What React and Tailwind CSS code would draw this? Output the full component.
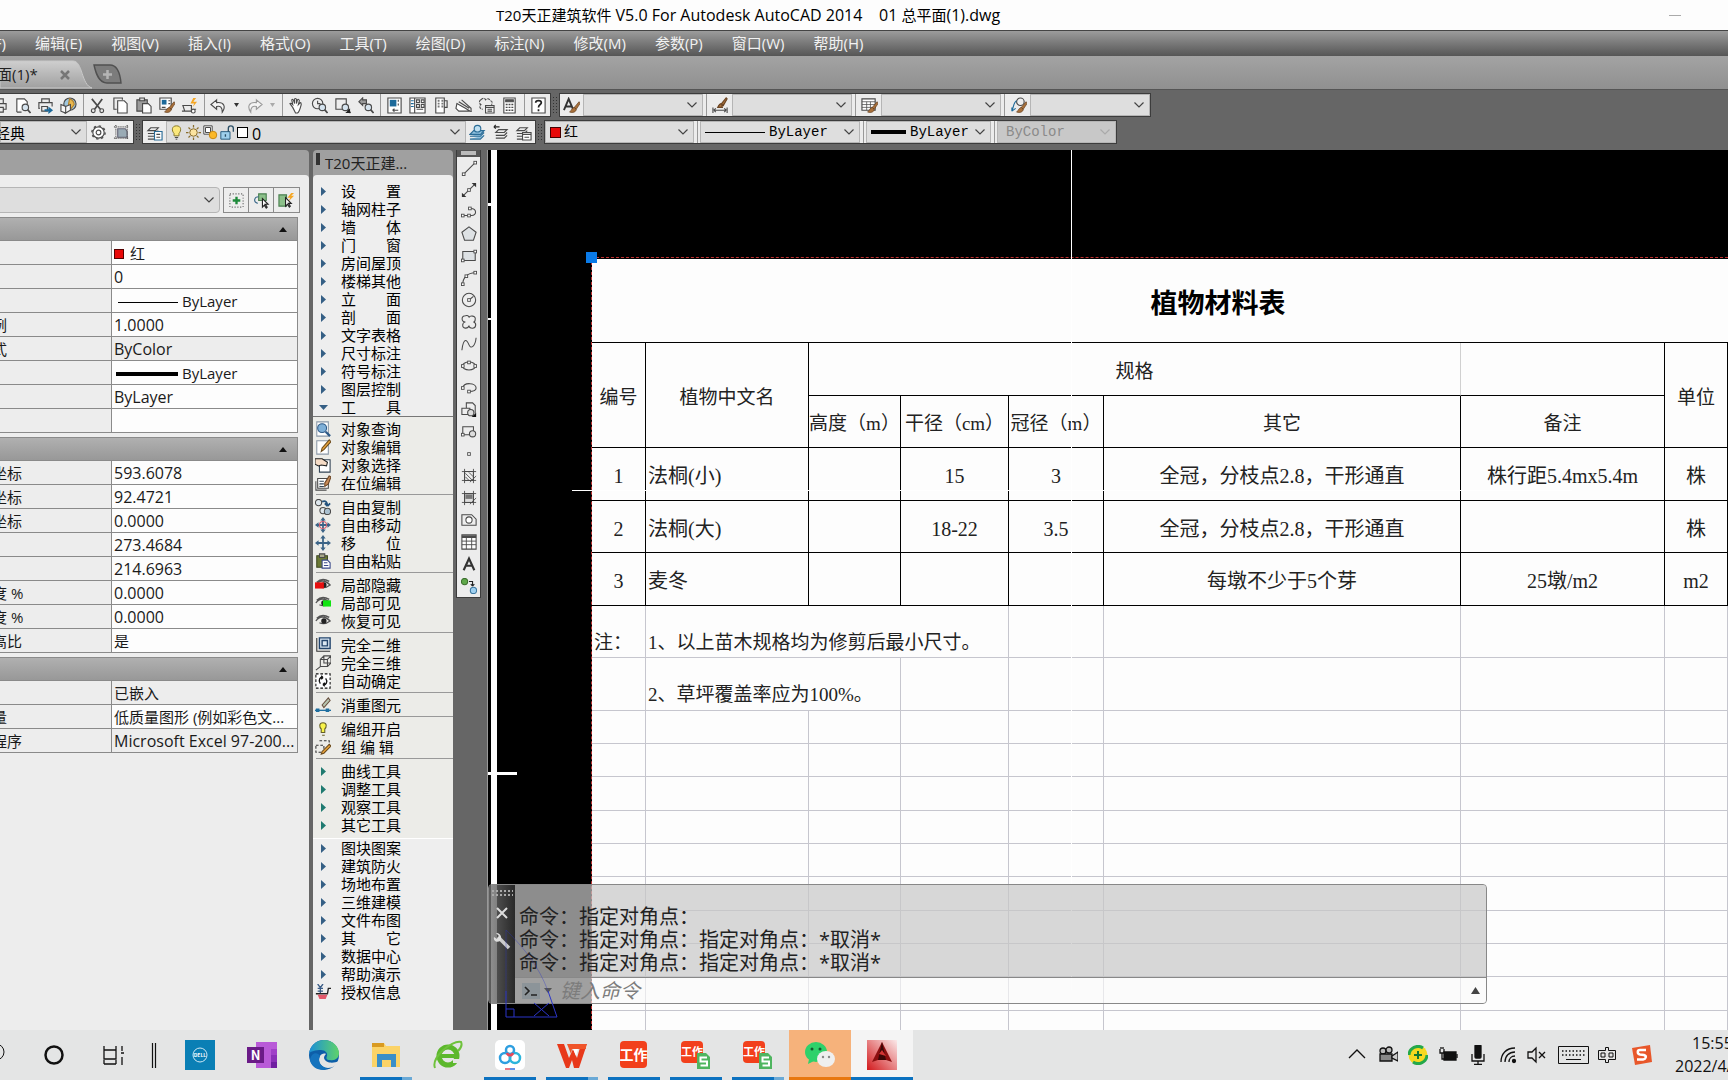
import { useState } from 'react';

const INK = '#4a4a4a';

function Svg({ size = 18, children, vb = '0 0 18 18' }) {
  return (
    <svg width={size} height={size} viewBox={vb} fill="none" stroke={INK} strokeWidth="1.2" className="shrink-0">
      {children}
    </svg>
  );
}

const brush = <path d="M17 5l-5 6 2 2 4-6zM12 11c-2 0-3 3-5 5 3 1 7 0 7-3z" fill="#a8703a" stroke="#6b4524" strokeWidth=".8" />;
const layers = <path d="M5 4h8l-3 3H2zM2 10h8l3-3M2 13h8l3-3M2 16h8l3-3" />;
const glass = <><circle cx="12" cy="11" r="3.4" fill="#d5e3ee" /><path d="M14.4 13.4L17.5 17" strokeWidth="1.8" /></>;

const TOOL_ICONS = {
  print: <><path d="M5 7V2h8v5M2 13V7h14v6h-3M5 11h8v5H5z" /></>,
  preview: <><path d="M3 16V2h8l3 3v3M3 16h5" fill="#fff" />{glass}</>,
  publish: <><path d="M5 6V2h8v4M3 12H2V6h14v4M5 10h6v5H5z" /><path d="M8 13h4v-3l5 4-5 4v-3H8z" fill="#1d6a9a" stroke="none" /></>,
  globe: <><circle cx="10.5" cy="7.5" r="6.5" fill="#9fc6dd" /><path d="M10 2c3 1 5 3 5 6l-3 4-3-4z" fill="#e9b84f" stroke="#b58127" /><path d="M1 8l5 2v7l-5-2zM6 10l5-2v6l-5 3z" fill="#f7f7f7" /></>,
  cut: <><path d="M3 2l9 11M14 2L6 13" strokeWidth="1.8" /><circle cx="4.5" cy="14.5" r="2" /><circle cx="13.5" cy="14.5" r="2" /></>,
  copy: <><path d="M11 3V1H2v12h3" /><path d="M6 4h7l3 3v10H6z" fill="#fff" /></>,
  paste: <><path d="M2 3h11v12H2z" fill="#9b9b9b" /><path d="M5 1h5v3H5z" fill="#ddd" /><path d="M8 7h6l3 3v7H8z" fill="#fff" /></>,
  match: <><path d="M2 1h12v12H2z" fill="#fff" /><path d="M4 3h5v5H4z" fill="#1d6a9a" stroke="none" /><path d="M11 4h2M11 7h2M4 11h4" />{brush}</>,
  block: <><path d="M2 9h9v6H4zM1 15h3M11 13h5" /><circle cx="13" cy="15" r="2" fill="#fff" /><path d="M13 1l-3 6h4l-2 4 5-6h-4l3-4z" fill="#f5a623" stroke="none" /></>,
  undo: <path d="M7 3L1 8l6 5v-3c4-1 6 1 6 6 4-6 2-11-6-10z" fill="#f4f4f4" />,
  redo: <path d="M11 3l6 5-6 5v-3c-4-1-6 1-6 6-4-6-2-11 6-10z" fill="#f4f4f4" stroke="#9a9a9a" />,
  pan: <path d="M5 11L2 7c1-1 2 0 3 1L4 3c1-1 2 0 2 1l1 3V2c1-1 2 0 2 1v4l1-4c1-1 2 0 2 1l-1 4 2-2c1 0 1 1 1 2-1 4-2 8-4 9H8z" fill="#fff" />,
  zoom: <><circle cx="7" cy="7" r="5.5" fill="#eee" /><path d="M7 4v3h3" />{glass}</>,
  zoomWin: <><path d="M2 2h11v11H2z" fill="#eee" />{glass}<path d="M17 12v5h-5z" fill="#222" stroke="none" /></>,
  zoomPrev: <><path d="M6 1L2 5l4 4V7h4V3H6z" fill="#999" />{glass}</>,
  props: <><path d="M2 1h14v16H2z" fill="#fff" /><path d="M4 3h7v7H4z" fill="#1d6a9a" stroke="none" /><path d="M13 3v2M13 7v2M7 14h6M7 14l2-1.500M7 14l2 1.500" /></>,
  center: <><path d="M1 1h16v16H1zM6 1v16" fill="#fff" /><path d="M2 4h3M2 7h3M2 10h3" stroke="#1d6a9a" /><path d="M8 3h3v3H8zM13 3h3v3h-3zM8 8h3v3H8zM13 8h3v3h-3zM8 13h7" /></>,
  palettes: <><path d="M4 1h9v16H4z" fill="#fff" /><path d="M6 4h2M10 4h2M6 7h2M10 7h2M6 10h2M10 10h2" strokeWidth="2" stroke="#777" /><path d="M13 4h3v7h-3" /></>,
  sheets: <><path d="M2 7l9 5 5 3H4L1 12z" fill="#fff" /><path d="M4 5l11 7M7 3l10 9v4" /></>,
  markup: <><path d="M3 3c2-2 4-2 5 0 2-2 4-1 5 1 2 0 3 3 1 4M3 3C1 4 1 7 3 8c-2 2-1 5 2 5" strokeDasharray="3 1" /><path d="M8 9h9v8H8z" fill="#fff" /><path d="M8 11h9M10 13h5M10 15h5" /></>,
  calc: <><path d="M3 1h12v16H3z" fill="#fff" /><path d="M5 3h8v2H5z" fill="#555" /><path d="M5 8h8M5 11h8M5 14h8" strokeWidth="1.500" strokeDasharray="2 1" /></>,
  help: <><path d="M2 1h14v16H2z" fill="#fff" /><path d="M6 6c0-3 6-3 6 0 0 2-3 2-3 5M9 13v2" stroke="#222" strokeWidth="1.800" /></>,
  textStyle: <><path d="M1 14L6 2l5 12M3 10h6" stroke="#333" strokeWidth="2" />{brush}</>,
  dimStyle: <><path d="M1 11v6M16 11v6M2 14h13M2 14l2-2M2 14l2 2M15 14l-2-2M15 14l-2 2" /><path d="M15 1l-5 6 2 2 4-7zM10 7c-2 0-3 2-4 4h5z" fill="#a8703a" stroke="#6b4524" /></>,
  tableStyle: <><path d="M1 2h14v12H1z" fill="#fff" /><path d="M1 5h14M1 8h14M1 11h14M6 5v9M10 5v9" strokeWidth=".8" />{brush}</>,
  leaderStyle: <><circle cx="11" cy="5" r="4" fill="#eee" /><path d="M7 4C4 5 4 10 2 15M2 15v-4M2 15l4-3" stroke="#1d6a9a" />{brush}</>,
  gear: <><circle cx="9" cy="9" r="6" fill="#fff" /><circle cx="9" cy="9" r="2.500" /><circle cx="9" cy="9" r="7" strokeDasharray="2.500 3" strokeWidth="1.500" /></>,
  workspace: <><path d="M5 5h8l2 3v6H5z" fill="#9aabb5" stroke="#667" /><path d="M1 3h16M3 1v16M15 1v16M1 15h16" strokeDasharray="1 1" /></>,
  layerMgr: <>{layers}<path d="M9 8h8v9H9z" fill="#fff" stroke="#2b6c96" /><path d="M11 11h4M11 14h4" /></>,
  layerCur: <><path d="M5 7h11l-4 4H1zM1 13h11l4-4M1 16h11l4-4" fill="#8fc1df" stroke="#2b6c96" /><circle cx="9" cy="5" r="3.500" fill="#bfe0f2" stroke="#2b6c96" /></>,
  layerPrev: <><path d="M7 6h9l-3 3H4zM4 12h9l3-3M4 15h9l3-3" /><path d="M8 3H2M2 3l2-2M2 3l2 2" stroke="#222" /></>,
  layerState: <>{layers}<path d="M8 9h9v8H8z" fill="#fff" /><path d="M8 11h9M10 14h5" /></>,
  addSel: <><path d="M2 2h14v14H2z" strokeDasharray="1 2" /><path d="M9 5v8M5 9h8" stroke="#1f8a3b" strokeWidth="2.500" /></>,
  pickSel: <><path d="M6 2h8v7H6z" fill="#8cc08a" stroke="#4a8050" /><path d="M6 5C1 5 0 11 5 12" stroke="#3d6b8c" /><path d="M10 7v9l2-2 2 3 1-1-2-3h3z" fill="#fff" stroke="#222" /></>,
  quickSel: <><path d="M1 3h8v12H1z" fill="#8cc08a" stroke="#4a8050" /><path d="M14 1l-4 5h3l-2 4 6-6h-3l3-3z" fill="#f5a623" stroke="none" /><path d="M8 6v9l2-2 2 3 1-1-2-3h3z" fill="#fff" stroke="#222" /></>,
  bulb: <><path d="M9 1c-6 0-6 6-3 9v3h6v-3c3-3 3-9-3-9z" fill="#fbe87c" stroke="#8a7a2a" /><path d="M7 15h4M8 17h2" /></>,
  sun: <><circle cx="9" cy="9" r="4.500" fill="#fbe3a0" stroke="#8a6d2c" /><path d="M9 0v3M9 15v3M0 9h3M15 9h3M3 3l2 2M13 13l2 2M15 3l-2 2M3 15l2-2" stroke="#8a6d2c" strokeWidth="1.500" /></>,
  vpSun: <><path d="M1 1h10v10H1zM3 3h6v6H3z" fill="#fff" /><circle cx="12" cy="12" r="4.500" fill="#fbb829" stroke="#c98a14" /></>,
  lock: <><path d="M1 8h11v9H1z" fill="#9fd0ec" stroke="#2b5f80" /><path d="M10 8V4c0-4 6-4 6 0v4M6.500 11v3" stroke="#2b4f66" strokeWidth="1.600" /></>,
};

const node = (x, y) => <rect x={x - 1.5} y={y - 1.5} width="3" height="3" fill="#fff" strokeWidth="1" />;
const DRAW_TOOLS = [
  ['直线', <><path d="M3 16L16 3" />{node(3, 16)}{node(16, 3)}</>],
  ['构造线', <><path d="M2 16L16 2" />{node(9, 9)}<path d="M1 17v-5l5 5zM17 1v5l-5-5z" fill="#333" stroke="none" /></>],
  ['多段线', <><path d="M2 13h10c6 0 6-8-1-8" />{node(2, 13)}{node(9, 13)}{node(10, 5)}</>],
  ['正多边形', <path d="M9 1l8 6-3 9H4L1 7z" fill="#dde1e4" />],
  ['矩形', <><path d="M2 4h14v10H2z" fill="#dde1e4" />{node(2, 14)}{node(16, 4)}</>],
  ['圆弧', <><path d="M2 16C2 9 7 3 16 3" />{node(2, 16)}{node(6, 7)}{node(16, 3)}</>],
  ['圆', <><circle cx="9" cy="9" r="7.500" fill="#eee" /><path d="M9 9l5-4" />{node(9, 9)}</>],
  ['修订云线', <path d="M5 9C0 9 0 2 5 2c2-1 4 0 4 2 1-3 8-2 7 2 0 2-1 3-2 3 4 1 3 7-1 7-2 0-4-1-4-3-1 4-8 4-7-1 0-1 1-3 3-3z" fill="#eee" />],
  ['样条曲线', <path d="M1 16C3 0 7 5 9 10s7 2 8-8" />],
  ['椭圆', <><ellipse cx="9" cy="9" rx="7.500" ry="4.500" fill="#eee" />{node(2, 9)}{node(9, 5)}{node(16, 9)}</>],
  ['椭圆弧', <><path d="M2 9C3 2 17 3 17 9c0 3-4 4-8 4" />{node(2, 9)}{node(9, 13)}</>],
  ['插入块', <><path d="M6 7V1h7l3 3v9M1 7h9v7H1z" fill="#eee" /><circle cx="11" cy="12" r="3.500" fill="#ddd" /><path d="M17 12v5h-5z" fill="#111" stroke="none" /></>],
  ['创建块', <><path d="M2 3h12v9H2z" fill="#eee" />{node(2, 12)}<circle cx="13" cy="11" r="3.500" fill="#ddd" /></>],
  ['点', <>{node(9, 9)}</>],
  ['图案填充', <><path d="M4 4h10v10H4z" fill="#eee" /><path d="M1 4h16M4 1v16M14 1v16M1 14h16M5 6l8 8M5 10l4 4M9 5l5 5M10 16l7-7" strokeWidth="1" /></>],
  ['渐变色', <><path d="M4 4h10v10H4z" fill="#ddd" /><path d="M5 5h8v5H5z" fill="#777" stroke="none" /><path d="M1 4h16M4 1v16M14 1v16M1 14h16M10 16l7-7" strokeWidth="1" /></>],
  ['面域', <><path d="M1 3h11l5 5v7H1z" fill="#eee" /><circle cx="9" cy="9" r="3.500" fill="#fff" /></>],
  ['表格', <><path d="M1 1h16v16H1z" fill="#fff" /><path d="M1 3h16" strokeWidth="3" /><path d="M1 8h16M1 12h16M6 4v13M12 4v13" strokeWidth="1" /></>],
  ['多行文字', <path d="M3 16L9 3l6 13M5 11h8" stroke="#333" strokeWidth="2.400" />],
  ['添加选定对象', <><circle cx="4" cy="4" r="3.500" fill="#5fa84a" stroke="#3b6e2d" /><path d="M9 4h4v5M13 9l-2-2M13 9l2-2" stroke="#222" /><circle cx="14" cy="14" r="3.500" fill="#9fd0f0" stroke="#3c77a0" /></>],
];

const eye = <><path d="M1 9c4-6 10-6 16 0-4 3-8 4-12 2M2 6c4-4 9-4 14-1" stroke="#555" strokeWidth="1.500" /><circle cx="10" cy="9" r="3" fill="#222" stroke="none" /></>;
const move = <path d="M9 0l3 4h-2v4h4V6l4 3-4 3v-2h-4v4h2l-3 4-3-4h2v-4H4v2L0 9l4-3v2h4V4H6z" fill="#3c6487" stroke="none" />;
const MENU_ICONS = {
  query: <><path d="M2 1h13v16H2z" fill="#fff" stroke="#8a98a8" /><circle cx="8" cy="8" r="5" fill="#7fb0d8" stroke="#2d5987" /><path d="M12 12l5 5" stroke="#2d5987" strokeWidth="2.500" /></>,
  edit: <><path d="M2 2h13v15H2z" fill="#fff" stroke="#8a98a8" /><path d="M16 1L8 10l-1 4 3-2 8-9z" fill="#e8a33a" stroke="#6b4a1c" /></>,
  select: <><path d="M5 3h12v14H5z" fill="#fff" stroke="#345" /><path d="M0 2h8l6 4-1 4-6-1-3 1-4-2z" fill="#f6dcc6" stroke="#222" /></>,
  inplace: <><path d="M3 4h12v11H3zM1 7v10h12" fill="#fff" /><path d="M5 7h5M5 10h5M5 13h5" stroke="#345" /><path d="M16 1l-5 8v4l4-3 3-8z" fill="#c98c5a" stroke="#6b4524" /></>,
  copy: <><circle cx="4" cy="4" r="3.500" fill="#dfe8ee" /><circle cx="9" cy="13" r="3.500" fill="#dfe8ee" /><circle cx="14" cy="14" r="3.500" fill="#a9c0d0" /><path d="M8 3c4-2 6 1 6 5M14 8l-3-3M14 8l3-3" stroke="#23527d" strokeWidth="2" /></>,
  move: <>{move}<circle cx="9" cy="9" r="4" stroke="#d06070" /></>,
  shift: move,
  paste: <><path d="M2 3h12v13H2z" fill="#6c7a35" stroke="#3d4720" /><path d="M5 1h6v4H5z" fill="#a8a88a" /><path d="M8 8h6l3 3v6H8z" fill="#fff" stroke="#3a4a8a" /><path d="M10 11h4M10 14h5" stroke="#3a4a8a" /></>,
  hide: <>{eye}<path d="M0 6h10v7H0z" fill="#e60f0f" stroke="none" /></>,
  show: <>{eye}<path d="M9 6h9v7H9z" fill="#12e312" stroke="none" /></>,
  restore: eye,
  two: <><path d="M5 1h12v12H5zM8 4h6v6H8z" fill="#dbe8f4" stroke="#23456d" strokeWidth="1.600" /><path d="M2 1v15h15" stroke="#333" /></>,
  three: <><path d="M6 5h8v8H6zM10 1h8v8h-8zM6 5l4-4M14 5l4-4M14 13l4-4M6 13l-5 4" /></>,
  auto: <><path d="M1 1h16v16H1z" stroke="#111" strokeDasharray="3 2" fill="#fff" /><path d="M6 12C3 8 6 4 9 5M12 6c3 4 0 8-3 7M9 5L7 3M9 5L7 7M9 13l2 2M9 13l2-2" stroke="#111" strokeWidth="1.500" /></>,
  erase: <><path d="M15 1l-7 8 2 3 7-8z" fill="#b7c5b0" stroke="#6a5140" /><path d="M0 15h18" stroke="#1f6fa0" strokeWidth="1.500" /><path d="M1 13h4v4H1zM12 13h4v4h-4z" fill="#1f6fa0" stroke="none" /></>,
  bulb: <path d="M9 2C4 2 5 7 7 9v4h4V9c2-2 3-7-2-7zM8 16h3" fill="#f8f34a" stroke="#66602a" />,
  group: <><path d="M5 2h11v5M1 7h9v8H1z" strokeDasharray="3 2" stroke="#333" /><path d="M16 6l-8 8-1 3 3-1 8-8z" fill="#e8a33a" stroke="#6b4a1c" /></>,
  auth: <><path d="M3 0l3 4 3-4M6 4v6M3 5h6M3 8h6" stroke="#3a5c86" strokeWidth="1.500" /><path d="M1 11h13l1-6h3" stroke="#222" strokeWidth="1.500" /><path d="M3 12h11l-2 5H5z" fill="#e2596b" stroke="none" /></>,
};

const MENUS = ['编辑(E)', '视图(V)', '插入(I)', '格式(O)', '工具(T)', '绘图(D)', '标注(N)', '修改(M)', '参数(P)', '窗口(W)', '帮助(H)'];

const STANDARD_BAR = [
  'print', 'preview', 'publish', 'globe', '|', 'cut', 'copy', 'paste', 'match', 'block', '|', 'undo', 'v', 'redo', 'v', '|',
  'pan', 'zoom', 'zoomWin', 'zoomPrev', '|', 'props', 'center', 'palettes', 'sheets', 'markup', 'calc', '|', 'help',
];

const TOP_MENU = ['设置', '轴网柱子', '墙体', '门窗', '房间屋顶', '楼梯其他', '立面', '剖面', '文字表格', '尺寸标注', '符号标注', '图层控制'];
const TOOL_GROUPS = [
  [['对象查询', 'query'], ['对象编辑', 'edit'], ['对象选择', 'select'], ['在位编辑', 'inplace']],
  [['自由复制', 'copy'], ['自由移动', 'move'], ['移位', 'shift'], ['自由粘贴', 'paste']],
  [['局部隐藏', 'hide'], ['局部可见', 'show'], ['恢复可见', 'restore']],
  [['完全二维', 'two'], ['完全三维', 'three'], ['自动确定', 'auto']],
  [['消重图元', 'erase']],
  [['编组开启', 'bulb'], ['组 编 辑', 'group']],
  [['曲线工具'], ['调整工具'], ['观察工具'], ['其它工具']],
];
const BOTTOM_MENU = ['图块图案', '建筑防火', '场地布置', '三维建模', '文件布图', '其它', '数据中心', '帮助演示'];

const thin = <span className="inline-block w-[60px] h-px bg-black align-middle ml-1 mr-1" />;
const thick = <span className="inline-block w-[62px] h-1 bg-black align-middle ml-0.5 mr-1" />;
const PROP_SECTIONS = [
  [
    ['', <><span className="inline-block size-[10px] bg-[#e80808] border border-[#500] mr-1.5" />红</>],
    ['', '0'],
    ['', <>{thin}ByLayer</>],
    ['例', '1.0000'],
    ['式', 'ByColor', true],
    ['', <>{thick}ByLayer</>],
    ['', 'ByLayer'],
    ['', ''],
  ],
  [
    ['坐标', '593.6078'],
    ['坐标', '92.4721'],
    ['坐标', '0.0000'],
    ['', '273.4684'],
    ['', '214.6963'],
    ['度 %', '0.0000'],
    ['度 %', '0.0000'],
    ['高比', '是'],
  ],
  [
    ['', '已嵌入', true],
    ['量', '低质量图形 (例如彩色文...'],
    ['程序', 'Microsoft Excel 97-200...', true],
  ],
];

const PLANTS = [
  ['1', '法桐(小)', '', '15', '3', '全冠，分枝点2.8，干形通直', '株行距5.4mx5.4m', '株'],
  ['2', '法桐(大)', '', '18-22', '3.5', '全冠，分枝点2.8，干形通直', '', '株'],
  ['3', '麦冬', '', '', '', '每墩不少于5个芽', '25墩/m2', 'm2'],
];

function Chevron({ dim }) {
  return (
    <svg width="10" height="6" viewBox="0 0 10 6" fill="none" stroke={dim ? '#aaa' : '#444'} strokeWidth="1.2"
      className="absolute right-[5px] top-1/2 -translate-y-1/2 pointer-events-none">
      <path d="M.5.5L5 5 9.500.5" />
    </svg>
  );
}

function Combo({ label, value = '', className = '', selectClass = '', disabled, children }) {
  return (
    <div className={`relative h-full border border-[#b5b5b5] ${disabled ? 'bg-[#c8c8c8]' : 'bg-[#dedede]'} ${className}`}>
      <select aria-label={label} disabled={disabled} className={`appearance-none block w-full h-full bg-transparent outline-none opacity-100 ${selectClass}`}>
        <option>{value}</option>
      </select>
      {children && <div className="absolute inset-y-0 left-0 flex items-center pointer-events-none">{children}</div>}
      <Chevron dim={disabled} />
    </div>
  );
}

function BarButton({ name }) {
  return (
    <button aria-label={name} className="w-[23px] h-full flex items-center justify-center shrink-0">
      <Svg size={17}>{TOOL_ICONS[name]}</Svg>
    </button>
  );
}

function Divider() {
  return <span className="w-1.5 h-full flex justify-center shrink-0"><span className="w-px h-full bg-[#999]" /></span>;
}

function Grip() {
  return (
    <span className="w-2 h-full shrink-0 px-px py-[3px]">
      <span className="block h-full bg-[radial-gradient(#333_1px,transparent_1px)] bg-[size:3px_3px]" />
    </span>
  );
}

function Toolbars() {
  return (
    <div className="bg-[#666] border-t border-[#555] pt-[3px] pb-1.5 flex flex-col gap-[3px] shrink-0">
      <div className="flex h-6 items-stretch">
        <div className="flex items-center bg-[#ececec] border-y border-r border-[#3c3c3c]">
          <div className="flex items-center h-full -ml-3">
            {STANDARD_BAR.map((name, i) => {
              if (name === '|') return <Divider key={i} />;
              if (name === 'v') return (
                <button key={i} aria-label="more" className="w-[13px] h-full flex items-center justify-center">
                  <svg width="5" height="4" viewBox="0 0 5 4"><path d="M0 0h5L2.500 4z" fill={i > 13 ? '#aaa' : '#333'} /></svg>
                </button>
              );
              return <BarButton key={i} name={name} />;
            })}
          </div>
        </div>
        <Grip />
        <div className="flex items-center bg-[#ececec] border border-[#3c3c3c]">
          {['textStyle', 'dimStyle', 'tableStyle', 'leaderStyle'].map((name, i) => (
            <div key={name} className="flex items-center h-full">
              {i > 0 && <Divider />}
              <BarButton name={name} />
              <Combo label={name} className="w-[120px]" />
            </div>
          ))}
        </div>
      </div>

      <div className="flex h-6 items-stretch">
        <div className="flex items-center bg-[#ececec] border-y border-r border-[#3c3c3c]">
          <Combo label="工作空间" value="经典" className="w-[87px]" selectClass="-ml-[6px] text-[15px]" />
          <BarButton name="gear" />
          <BarButton name="workspace" />
        </div>
        <Grip />
        <div className="flex items-center bg-[#ececec] border border-[#3c3c3c]">
          <BarButton name="layerMgr" />
          <Combo label="图层" value="0" className="w-[300px]" selectClass="pl-[85px] text-base">
            <div className="flex items-center gap-[2px] pl-0.5">
              <Svg size={15}>{TOOL_ICONS.bulb}</Svg>
              <Svg size={15}>{TOOL_ICONS.sun}</Svg>
              <Svg size={15}>{TOOL_ICONS.vpSun}</Svg>
              <Svg size={15}>{TOOL_ICONS.lock}</Svg>
              <span className="size-[11px] border border-black bg-white" />
            </div>
          </Combo>
          <BarButton name="layerCur" />
          <BarButton name="layerPrev" />
          <BarButton name="layerState" />
        </div>
        <Grip />
        <div className="flex items-center bg-[#ececec] border border-[#3c3c3c] font-['Liberation_Mono','Noto_Sans_CJK_SC',monospace] text-sm">
          <Combo label="颜色" value="红" className="w-[149px]" selectClass="pl-[18px]">
            <span className="size-[11px] ml-1 bg-[#e80808] border border-[#400]" />
          </Combo>
          <Divider />
          <Combo label="线型" value="ByLayer" className="w-[160px]" selectClass="pl-[68px]">
            <span className="w-[60px] h-px ml-1 bg-black" />
          </Combo>
          <Divider />
          <Combo label="线宽" value="ByLayer" className="w-[125px]" selectClass="pl-[43px]">
            <span className="w-[35px] h-1 ml-1 bg-black" />
          </Combo>
          <Divider />
          <Combo label="打印样式" value="ByColor" className="w-[119px]" selectClass="pl-2 text-[#8a8a8a]" disabled />
        </div>
      </div>
    </div>
  );
}

// plain ASCII values are set one step larger than the Chinese ones
const isLatin = (value) => typeof value === 'string' && /^[ -~]+$/.test(value);

function PropertySection({ rows }) {
  const [open, setOpen] = useState(true);
  return (
    <section className="mb-1">
      <button
        onClick={() => setOpen(!open)}
        aria-label="折叠"
        className="flex items-center justify-end w-full h-6 pr-[10px] bg-linear-to-b from-[#b0b0b0] to-[#989898] border-y border-r border-[#8a8a8a]"
      >
        <svg width="8" height="5" viewBox="0 0 8 5"><path d="M0 5h8L4 0z" fill="#111" /></svg>
      </button>
      {open && (
        <table className="w-full table-fixed border-separate border-spacing-0 text-[15px] leading-5 text-[#1a1a1a]">
          <colgroup><col className="w-28" /><col /></colgroup>
          <tbody>
            {rows.map(([label, value, locked], i) => (
              <tr key={i} className="h-6">
                <th className="p-0 font-normal text-left border-r border-b border-[#8a8a8a] overflow-hidden whitespace-nowrap">
                  <span className="-ml-2">{label}</span>
                </th>
                <td className={`p-0 pl-[2px] border-r border-b border-[#8a8a8a] overflow-hidden whitespace-nowrap ${locked ? 'bg-[#ededed]' : 'bg-[#fdfdfd]'} ${isLatin(value) ? 'text-base leading-5' : ''}`}>
                  {value}
                </td>
              </tr>
            ))}
          </tbody>
        </table>
      )}
    </section>
  );
}

function PropertiesPalette() {
  return (
    <aside className="w-[309px] shrink-0 flex flex-col bg-[#a0a0a0] rounded-tr">
      <div className="h-[25px] shrink-0" />
      <div className="flex-1 bg-[#ededed] rounded-tr pt-3 pr-[11px]">
        <div className="flex h-[26px] mb-1 gap-[3px] -mr-0.5">
          <Combo label="选择对象" className="flex-1 rounded-r-sm -ml-px" />
          <div className="flex border border-[#8a8a8a] divide-x divide-[#8a8a8a]">
            {['addSel', 'pickSel', 'quickSel'].map((n) => (
              <button key={n} aria-label={n} className="w-[25px] flex items-center justify-center"><Svg size={17}>{TOOL_ICONS[n]}</Svg></button>
            ))}
          </div>
        </div>
        {PROP_SECTIONS.map((rows, i) => <PropertySection key={i} rows={rows} />)}
      </div>
    </aside>
  );
}

function MenuRow({ text, icon, color = '#355f85', open }) {
  return (
    <button className="flex items-center w-full h-[18px] pl-0.5 text-[15px] leading-[18px] text-black">
      <span className="w-[26px] shrink-0 flex">
        {icon && <Svg size={16}>{MENU_ICONS[icon]}</Svg>}
        {!icon && !open && <svg width="5" height="9" viewBox="0 0 5 9" className="ml-[6px]"><path d="M0 0v9l5-4.500z" fill={color} /></svg>}
        {open && <svg width="9" height="5" viewBox="0 0 9 5" className="ml-1"><path d="M0 0h9L4.500 5z" fill={color} /></svg>}
      </span>
      {text.length === 2
        ? <span className="w-[60px] flex justify-between"><span>{text[0]}</span><span>{text[1]}</span></span>
        : <span className="whitespace-nowrap">{text}</span>}
    </button>
  );
}

function TangentPalette() {
  return (
    <aside className="w-[140px] shrink-0 flex flex-col bg-[#a0a0a0] rounded-t ml-1">
      <div className="h-[25px] shrink-0 flex items-center pl-[3px] pt-px gap-[5px] text-[15px] text-[#222]">
        <span className="w-1 h-3 mb-2 bg-[radial-gradient(#333_1px,transparent_1px)] bg-[size:2px_3px]" />
        T20天正建...
      </div>
      <div className="flex-1 bg-[#eee] rounded-t pt-[7px]">
        {TOP_MENU.map((t) => <MenuRow key={t} text={t} />)}
        <MenuRow text="工具" open />
        <div className="border-b border-[#777]" />
        <div className="bg-[#ecece8] pt-[3px] pb-1">
          {TOOL_GROUPS.map((group, i) => (
            <div key={i}>
              {i > 0 && <div className="h-1.5 pt-[2px]"><div className="h-px ml-[3px] bg-[#999]" /></div>}
              {group.map(([t, icon]) => <MenuRow key={t} text={t} icon={icon} color="#1f7a70" />)}
            </div>
          ))}
        </div>
        <div className="border-t border-white">
          {BOTTOM_MENU.map((t) => <MenuRow key={t} text={t} />)}
          <MenuRow text="授权信息" icon="auth" />
        </div>
      </div>
    </aside>
  );
}

function DrawToolbar() {
  return (
    <div className="w-[35px] shrink-0 pl-[3px] border-r border-[#999] bg-[#666]">
      <div className="w-[25px] -mt-0.5 border border-[#3c3c3c] bg-[#ececec]">
        <div className="h-2 bg-[#555] px-1 py-[2px]"><div className="h-full bg-[radial-gradient(#bbb_1px,transparent_1px)] bg-[size:2px_2px]" /></div>
        {DRAW_TOOLS.map(([label, icon]) => (
          <button key={label} aria-label={label} className="w-full h-[22px] flex items-center justify-center"><Svg size={16}>{icon}</Svg></button>
        ))}
      </div>
    </div>
  );
}

const B = 'border-r border-b border-black';
const G = 'border-r border-b border-[#c6c6ce]';

function PlantSheet() {
  return (
    <div className="bg-[#fdfdfd] text-[#222] font-['Liberation_Serif','Noto_Sans_CJK_SC',serif]">
      <table className="w-full table-fixed border-separate border-spacing-0 text-[19px] leading-6 text-center whitespace-nowrap">
        <colgroup>
          <col className="w-[54px]" /><col className="w-[163px]" /><col className="w-[92px]" /><col className="w-[108px]" />
          <col className="w-[95px]" /><col className="w-[357px]" /><col className="w-[204px]" /><col />
        </colgroup>
        <thead>
          <tr className="h-[84px]">
            <th colSpan={8} className="p-0 pt-1.5 pl-[116px] border-b border-black text-[27px] font-bold text-black">植物材料表</th>
          </tr>
          <tr className="h-[53px]">
            <th rowSpan={2} className={`p-0 pt-1.5 font-normal ${B}`}>编号</th>
            <th rowSpan={2} className={`p-0 pt-1.5 font-normal ${B}`}>植物中文名</th>
            <th colSpan={4} className="p-0 pt-1.5 font-normal border-b border-b-black border-r border-r-[#d0d0d0]">规格</th>
            <th className={`p-0 ${B}`} />
            <th rowSpan={2} className={`p-0 pt-1.5 font-normal ${B}`}>单位</th>
          </tr>
          <tr className="h-[52px]">
            {['高度（m）', '干径（cm）', '冠径（m）', '其它', '备注'].map((h) => (
              <th key={h} className={`p-0 pt-1 font-normal ${B}`}>{h}</th>
            ))}
          </tr>
        </thead>
        <tbody className="text-[20px]">
          {PLANTS.map((row, i) => (
            <tr key={row[0]} className={i === 1 ? 'h-[52px]' : 'h-[53px]'}>
              {row.map((cell, j) => (
                <td key={j} className={`p-0 pt-1 ${B} ${j === 1 ? 'text-left pl-[2px]' : ''}`}>{cell}</td>
              ))}
            </tr>
          ))}
        </tbody>
        <tbody>
          <tr className="h-[52px]">
            <td className={`p-0 pt-[22px] pl-[2px] text-left ${G}`}>注：</td>
            <td colSpan={3} className={`p-0 pt-[22px] pl-[2px] text-left ${G}`}>1、以上苗木规格均为修剪后最小尺寸。</td>
            {[0, 1, 2, 3].map((k) => <td key={k} className={G} />)}
          </tr>
          <tr className="h-[53px]">
            <td className={G} />
            <td colSpan={2} className={`p-0 pt-[22px] pl-[2px] text-left ${G}`}>2、草坪覆盖率应为100%。</td>
            {[0, 1, 2, 3, 4].map((k) => <td key={k} className={G} />)}
          </tr>
          {Array.from({ length: 10 }, (_, r) => (
            <tr key={r} className={r % 3 === 2 ? 'h-[34px]' : 'h-[33px]'}>
              {Array.from({ length: 8 }, (_, c) => <td key={c} className={`p-0 ${G}`} />)}
            </tr>
          ))}
        </tbody>
      </table>
    </div>
  );
}

function CommandWindow() {
  return (
    <div className="absolute left-0 bottom-[26px] w-[999px] flex rounded-sm overflow-hidden border border-[#888]">
      <div className="w-[26px] shrink-0 flex flex-col items-center bg-linear-to-r from-[#777]/80 to-[#333]/80 pt-1">
        <div className="w-[22px] h-2 bg-[radial-gradient(#aaa_1px,transparent_1px)] bg-[size:4px_4px]" />
        <button aria-label="关闭" className="mt-[9px]">
          <svg width="14" height="14" viewBox="0 0 14 14" stroke="#ddd" strokeWidth="2"><path d="M2 2l10 10M12 2L2 12" /></svg>
        </button>
        <button aria-label="自定义" className="mt-3">
          <svg width="18" height="18" viewBox="0 0 18 18"><path d="M5 5l11 11" stroke="#ccc" strokeWidth="3.500" /><path d="M3 1l3 3-2 3-3-2c-1 4 3 6 6 4 3-3 0-9-4-8z" fill="#ddd" /></svg>
        </button>
      </div>
      <div className="flex-1">
        <div className="bg-[rgba(198,198,198,0.71)] pt-5 pb-[3px] pl-1 text-[20px] leading-[23px] text-[#222] border-b border-[#888]">
          <p>命令：指定对角点：</p>
          <p>命令：指定对角点：指定对角点：*取消*</p>
          <p>命令：指定对角点：指定对角点：*取消*</p>
        </div>
        <div className="h-[25px] flex items-center gap-2 pl-[7px] pr-[6px] bg-[rgba(250,250,250,0.64)]">
          <button aria-label="最近使用的命令" className="flex items-center gap-1">
            <svg width="18" height="16" viewBox="0 0 18 16"><path d="M0 0h18v16H0z" fill="#8c9499" /><path d="M3 4l4 4-4 4M9 12h6" stroke="#222" strokeWidth="1.600" fill="none" /></svg>
            <svg width="8" height="5" viewBox="0 0 8 5"><path d="M0 0h8L4 5z" fill="#555" /></svg>
          </button>
          <input aria-label="键入命令" placeholder="键入命令" className="flex-1 bg-transparent outline-none italic text-[20px] leading-6 placeholder:text-[#7c7c7c]" />
          <svg width="9" height="7" viewBox="0 0 9 7"><path d="M0 7h9L4.500 0z" fill="#444" /></svg>
        </div>
      </div>
    </div>
  );
}

function DrawingArea() {
  return (
    <main className="relative flex-1 min-w-0 bg-black overflow-hidden flex">
      <div className="w-1.5 ml-[3px] shrink-0 bg-white" />
      <div className="absolute left-0 top-[53px] w-[5px] h-[3px] bg-white" />
      <div className="absolute left-0 top-[168px] w-[5px] h-[2px] bg-white" />
      <div className="absolute left-0 top-[622px] w-[29px] h-[3px] bg-white" />
      <div className="relative flex-1 min-w-0 ml-[94px] mt-[107px]">
        <div className="border-l border-t border-dashed border-[#c03030] pt-px"><PlantSheet /></div>
        <div className="absolute -left-[5px] -top-[5px] size-[11px] bg-[#0a7be8]" />
      </div>
      <div className="absolute left-[583px] top-0 w-px h-[840px] bg-white" />
      <div className="absolute left-[84px] top-[340px] w-[1000px] h-px bg-white" />
      <CommandWindow />
      <svg className="absolute left-[17px] bottom-[11px] pointer-events-none" width="54" height="90" viewBox="0 0 54 90" fill="none" stroke="#2b35c8">
        <path d="M1 62v26h51l-9-26M1 80h8v8M29 74l15 13M44 74L29 87" />
        <path d="M1 62V1C20 20 34 38 43 62" opacity=".35" />
      </svg>
    </main>
  );
}

function WorkSheetLogo({ badge }) {
  return (
    <>
      <rect x={badge ? 0 : 1} y="1" width={badge ? 22 : 27} height={badge ? 22 : 27} rx="4" fill="#f2401c" />
      <text x={badge ? 11 : 14.5} y={badge ? 16 : 20} fontSize={badge ? 11 : 14} fontWeight="700" fill="#fff" textAnchor="middle">工作</text>
      {badge && (
        <>
          <path d="M16 13h9l4 4v12H16z" fill="#4fb560" />
          <path d="M26 17.500h-6.500v4H26v4h-6.500" stroke="#fff" strokeWidth="2" fill="none" />
        </>
      )}
    </>
  );
}

const TASKS = [
  ['Dell', '', <><path d="M0 0h30v30H0z" fill="#0a7fb5" /><circle cx="15" cy="15" r="7" stroke="#cfe8f5" fill="none" /><text x="15" y="17" fontSize="5" fontWeight="700" fill="#fff" textAnchor="middle">DELL</text></>],
  ['OneNote', '', <><path d="M9 2h21v26H9z" fill="#b95ad8" /><path d="M24 9h6v6h-6z" fill="#a040c8" /><path d="M24 15h6v7h-6z" fill="#8a30b8" /><path d="M24 22h6v6h-6z" fill="#6f1fa0" /><path d="M0 7h17v16H0z" fill="#6a1b87" /><text x="8.500" y="20" fontSize="13" fontWeight="700" fill="#fff" textAnchor="middle">N</text></>],
  ['Edge', '', <>
    <defs><linearGradient id="edge" x1="0" y1="0" x2="1" y2="0"><stop offset="0" stopColor="#1a8fd8" /><stop offset="1" stopColor="#5fd36a" /></linearGradient></defs>
    <circle cx="15" cy="15" r="15" fill="#0d5ea8" />
    <path d="M0 14C1 5 8 0 15 0c9 0 15 7 15 13 0 5-4 8-9 7-4 0-4-2-3-4 1-3-2-6-6-6-5 0-11 1-12 4z" fill="url(#edge)" />
    <path d="M30 21c-6 3-14 2-15-3 0-2 1-3 2-4-2-1-5 0-6 2-3 5 1 12 8 12 5 0 9-3 11-7z" fill="#e4e4e4" />
    <path d="M11 16c-3 6 2 12 8 12l-4 2C7 30 2 26 1 20c1-7 7-9 10-4z" fill="#1573bd" />
  </>],
  ['文件资源管理器', 'part', <><path d="M1 3h12l2 3h14v21H1z" fill="#fbd367" /><path d="M1 3h12v4H1z" fill="#d99a21" /><path d="M6 14h19v13h-5v-7h-9v7H6z" fill="#3a8fc8" /></>],
  ['360浏览器', '', <><circle cx="15" cy="16" r="9" stroke="#5cb82c" strokeWidth="5" fill="none" /><path d="M7 14h17v4H7z" fill="#5cb82c" /><path d="M20 19h8v4h-8z" fill="#e4e4e4" /><path d="M2 28C-2 18 18 0 28 2c2 4-2 8-3 9" stroke="#6fc23c" strokeWidth="2" fill="none" /></>],
  ['百度网盘', 'on', <><rect width="30" height="30" rx="5" fill="#fff" /><circle cx="10" cy="18" r="5" stroke="#2f9fe0" strokeWidth="2.500" fill="none" /><circle cx="20" cy="18" r="5" stroke="#2bb5dc" strokeWidth="2.500" fill="none" /><circle cx="15" cy="10" r="4" stroke="#2f9fe0" strokeWidth="2.500" fill="none" /><path d="M12 13c1 3 5 3 6 0" stroke="#e8485a" strokeWidth="2.500" fill="none" /><path d="M10 29h5" stroke="#e8485a" strokeWidth="1.500" /><path d="M15 29h5" stroke="#2f6fe0" strokeWidth="1.500" /></>],
  ['WPS', 'part', <><path d="M0 4h7l5 14 4-9 4 9 4-14h6l-8 24h-5l-2-8-3 8H9z" fill="#e8391a" /><path d="M10 4h19v5H15l-1 5z" fill="#f0552a" /><path d="M16 9l3 7 2-7z" fill="#fff" /></>],
  ['工作', 'on', <WorkSheetLogo />],
  ['工作表', 'on', <WorkSheetLogo badge />],
  ['工作表二', 'part', <WorkSheetLogo badge />],
  ['微信', 'wechat', <><ellipse cx="11" cy="12" rx="11" ry="10" fill="#2fd16a" /><path d="M4 19l-1 5 6-3z" fill="#2fd16a" /><circle cx="7" cy="9" r="1.500" fill="#145a30" /><circle cx="15" cy="9" r="1.500" fill="#145a30" /><ellipse cx="21" cy="19" rx="9" ry="8" fill="#efefef" /><circle cx="18" cy="17" r="1.200" fill="#888" /><circle cx="24" cy="17" r="1.200" fill="#888" /></>],
  ['AutoCAD', 'acad', <>
    <defs><linearGradient id="acad" x1="0" y1="1" x2="1" y2="0"><stop offset="0" stopColor="#d2191c" /><stop offset="1" stopColor="#fbeaea" /></linearGradient></defs>
    <path d="M0 0h30v30H0z" fill="url(#acad)" /><path d="M15 2L5 22l6-2h8l6 2z" fill="#8c0f10" /><path d="M15 2l-4 18h8z" fill="#3c0606" /><path d="M12 14l3-4 4 6z" fill="#d23434" />
  </>],
];

function TaskButton({ label, state, children }) {
  const bg = state === 'wechat' ? 'bg-[#f6b27b]' : state === 'acad' ? 'bg-[#f4f4f4]' : '';
  const wide = state === 'wechat' || state === 'acad';
  return (
    <button aria-label={label} className={`w-[62px] h-full shrink-0 flex flex-col items-center justify-between pt-[10px] ${bg}`}>
      <svg width="30" height="30" viewBox="0 0 30 30" fontFamily="Noto Sans CJK SC">{children}</svg>
      <span className={`flex h-[3px] ${wide ? 'w-full' : 'w-[52px]'} ${state === 'wechat' ? 'bg-[#e8770f]' : state ? 'bg-[#0c72c0]' : ''}`}>
        {state === 'part' && <span className="ml-auto w-[10px] bg-[#6aa9d6]" />}
      </span>
    </button>
  );
}

const TRAY = [
  ['显示隐藏的图标', 32, <path d="M2 13l8-8 8 8" />],
  ['录像', 30, <><circle cx="5" cy="6" r="3" fill="#bbb" /><circle cx="11" cy="5" r="3" fill="#bbb" /><path d="M2 9h12v7H2z" fill="#888" /><path d="M14 11l6-4v9l-6-3z" fill="#ccc" /></>],
  ['360', 30, <><circle cx="10" cy="10" r="9.500" fill="#f6d920" stroke="none" /><path d="M1 10a9 9 0 0 1 14-7M19 10a9 9 0 0 1-14 7" stroke="#24a84a" strokeWidth="3" /><path d="M10 6v8M6 10h8" stroke="#157a33" strokeWidth="2" /></>],
  ['电池', 30, <><path d="M6 7h12v8H6z" fill="#111" /><path d="M19 9v4M2 4v4h4V4M3 2v2M5 2v2M4 8v6h2" /></>],
  ['麦克风', 30, <><rect x="7" y="0" width="6" height="13" rx="1" fill="#111" /><path d="M4 9v7h12V9M10 16v4M6 19.500h8" /></>],
  ['网络', 29, <><path d="M3 17C3 9 8 3 17 3M7 17c0-6 4-10 10-10M11 17c0-3 2-6 6-6" /><circle cx="16" cy="16" r="1.500" fill="#111" /></>],
  ['音量', 29, <path d="M1 7h4l4-4v14l-4-4H1zM12 7l6 6M18 7l-6 6" />],
];

function Taskbar() {
  return (
    <footer className="h-[50px] shrink-0 flex bg-[#e4e5e5] overflow-hidden">
      <div className="flex items-center w-[169px] shrink-0 text-black">
        <svg width="169" height="30" viewBox="0 0 169 30" fill="none" stroke="#111">
          <circle cx="-4" cy="12" r="8" />
          <circle cx="54" cy="15" r="8.500" strokeWidth="2.500" />
          <path d="M104 6v4h12V6M104 10v9h12v-9zM104 24v-4M116 20v4M104 24h12M122 6v5M122 17v8M121 13h3" strokeWidth="1.300" />
          <path d="M152.500 3v25M155.500 3v25" strokeWidth="1.200" />
        </svg>
      </div>
      {TASKS.map(([label, state, icon]) => <TaskButton key={label} label={label} state={state}>{icon}</TaskButton>)}
      <div className="flex items-center ml-auto shrink-0">
        {TRAY.map(([label, w, icon]) => (
          <button key={label} aria-label={label} style={{ width: w }} className="flex justify-center">
            <svg width="20" height="20" viewBox="0 0 20 20" fill="none" stroke="#111" strokeWidth="1.300">{icon}</svg>
          </button>
        ))}
        <button aria-label="键盘" className="w-11 flex justify-center">
          <svg width="31" height="18" viewBox="0 0 31 18" fill="none" stroke="#111"><path d="M.5.5h30v17H.5z" /><path d="M4 5h23M4 9h23" strokeDasharray="1.500 2" strokeWidth="1.500" /><path d="M8 13.500h15" /></svg>
        </button>
        <button aria-label="中" className="w-6 flex justify-center">
          <svg width="20" height="20" viewBox="0 0 20 20" fill="none" stroke="#111" strokeWidth="1"><path d="M8.500 2.500h3v3h7v9h-7v3h-3v-3h-7v-9h7zM4 8h4v4H4zM12 8h4v4h-4z" /></svg>
        </button>
        <button aria-label="搜狗输入法" className="w-[46px] flex justify-center">
          <svg width="20" height="20" viewBox="0 0 20 20"><path d="M0 3l18-3 2 17-17 3z" fill="#e8572a" /><path d="M14 5H8C5 5 5 9 8 9.500l4 .5c3 1 2 4-1 4.500H5" stroke="#fff" strokeWidth="2.400" fill="none" /></svg>
        </button>
        <div className="w-[63px] pl-[10px] text-base leading-[23px] text-[#111] whitespace-nowrap overflow-hidden">
          <p className="pl-[17px]">15:55</p>
          <p>2022/4/</p>
        </div>
      </div>
    </footer>
  );
}

export default function App() {
  return (
    <div className="h-screen flex flex-col overflow-hidden bg-[#666] font-['Open_Sans','Noto_Sans_CJK_SC',sans-serif]">
      <header className="h-[30px] shrink-0 flex items-center bg-[#fdfdfd] pl-[496px] text-[15px] text-black">
        <h1 className="whitespace-pre">
          T20天正建筑软件<span className="text-base"> V5.0 For Autodesk AutoCAD 2014    01 </span>总平面<span className="text-base">(1).dwg</span>
        </h1>
        <button aria-label="最小化" className="ml-auto mr-[47px] w-3 h-5 flex items-center"><span className="w-full h-px bg-[#aaa]" /></button>
      </header>
      <nav className="h-[26px] shrink-0 flex items-center gap-[29px] border-t border-[#444] bg-linear-to-b from-[#9c9c9c] to-[#565656] text-[15px] text-[#f2f2f2] whitespace-nowrap">
        <a href="#file" className="w-[6px] flex justify-end">F)</a>
        {MENUS.map((m) => <a key={m} href="#menu">{m}</a>)}
      </nav>
      <div className="h-[33px] shrink-0 flex items-end bg-linear-to-b from-[#a3a3a3] to-[#909090]">
        <div className="relative w-[92px] h-[29px]">
          <svg width="92" height="29" viewBox="0 0 92 29" className="absolute inset-0">
            <defs><linearGradient id="tab" x1="0" y1="0" x2="0" y2="1"><stop offset="0" stopColor="#cfcfcf" /><stop offset="1" stopColor="#a0a0a0" /></linearGradient></defs>
            <path d="M0 1h73c10 0 8 24 19 27H0z" fill="url(#tab)" stroke="#c8c8c8" />
          </svg>
          <div className="relative flex items-center h-full text-[15px] text-[#222] -ml-[3px]">
            面(1)*
            <button aria-label="关闭标签" className="ml-[22px]">
              <svg width="10" height="10" viewBox="0 0 10 10" stroke="#777" strokeWidth="2.500"><path d="M1 1l8 8M9 1L1 9" /></svg>
            </button>
          </div>
        </div>
        <button aria-label="新建" className="mb-[5px] ml-[1px]">
          <svg width="29" height="20" viewBox="0 0 29 20"><path d="M1 1h16c7 0 10 8 11 18H14C6 19 3 10 1 1z" fill="#7c7c7c" stroke="#505050" strokeWidth="1.400" /><path d="M14.500 6v9M10 10.500h9" stroke="#b5b5b5" strokeWidth="2.500" /></svg>
        </button>
      </div>
      <Toolbars />
      <div className="flex-1 min-h-0 flex overflow-hidden">
        <PropertiesPalette />
        <TangentPalette />
        <DrawToolbar />
        <DrawingArea />
      </div>
      <Taskbar />
    </div>
  );
}
